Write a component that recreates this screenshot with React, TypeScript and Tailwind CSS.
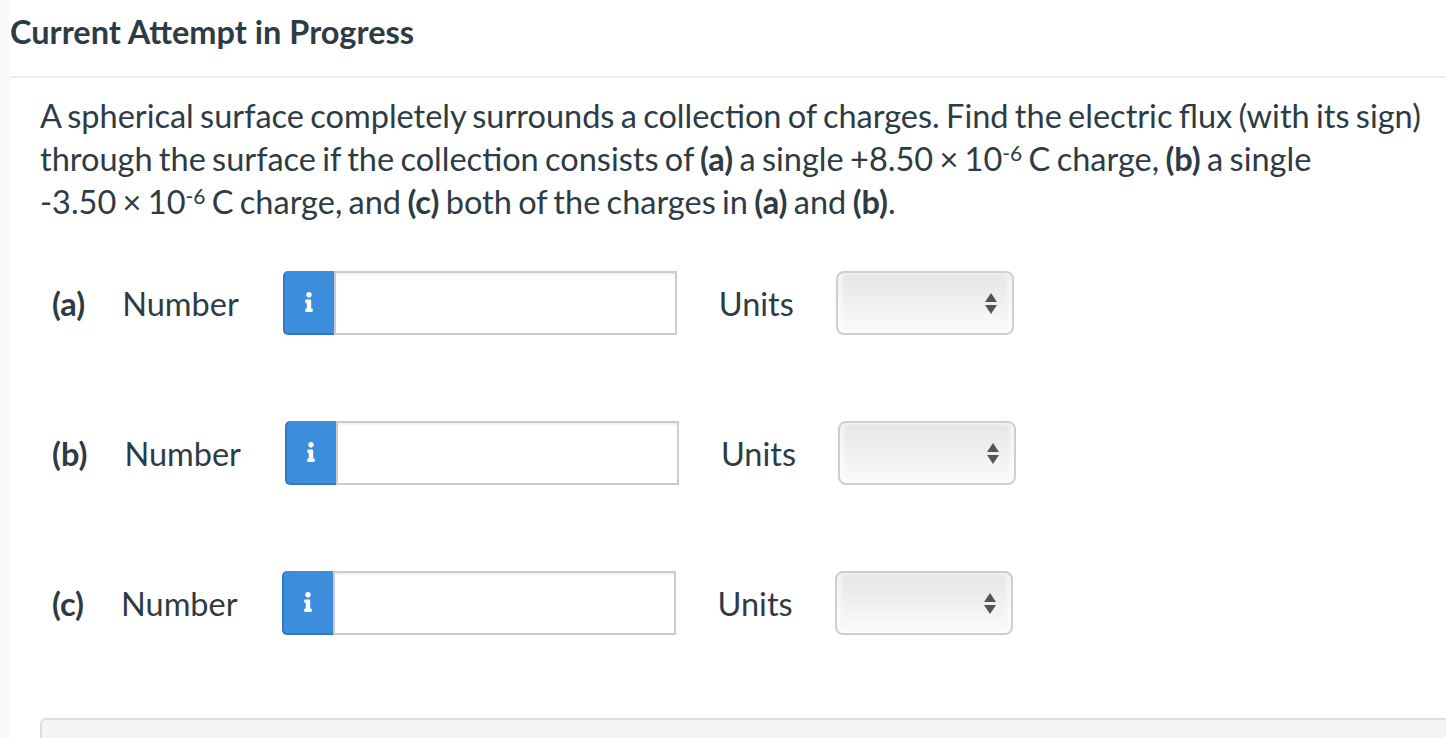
import { FaInfo } from "react-icons/fa";

const rows = [
  { label: "(a)" },
  { label: "(b)" },
  { label: "(c)" },
];

function AnswerRow({ label }: { label: string }) {
  return (
    <div className="flex items-center h-[64px]">
      <span className="font-bold ml-[12px] mr-[37px]">{label}</span>
      <span className="mr-[44px]">Number</span>
      <button className="w-[51px] h-[64px] bg-[#3d8ddd] border-b-2 border-l-2 border-[#2f78c4] rounded-l-[5px] flex items-center justify-center text-white">
        <FaInfo className="w-[12px] h-[20px]" />
      </button>
      <input
        type="text"
        className="w-[343px] h-[64px] border-2 border-[#cccccc] bg-white shadow-[inset_0_2px_2px_rgba(0,0,0,0.06)] outline-none"
      />
      <span className="ml-[42px]">Units</span>
      <div className="ml-[42px] w-[178px] h-[64px] rounded-[8px] border-2 border-[#cfcfcf] bg-gradient-to-b from-[#e5e5e5] to-[#fbfbfb] shadow-[inset_4px_0_4px_rgba(255,255,255,0.6),inset_-4px_0_4px_rgba(255,255,255,0.6)] flex items-center justify-end pr-[15px]">
        <div className="flex flex-col items-center gap-[3px]">
          <div className="w-0 h-0 border-l-[6px] border-r-[6px] border-b-[9px] border-l-transparent border-r-transparent border-b-[#555]" />
          <div className="w-0 h-0 border-l-[6px] border-r-[6px] border-t-[9px] border-l-transparent border-r-transparent border-t-[#555]" />
        </div>
      </div>
    </div>
  );
}

export default function App() {
  return (
    <div
      className="flex h-[738px] overflow-hidden bg-white text-[#2d3b45] text-[32.5px] leading-[43px]"
      style={{ fontFamily: "Lato, 'Noto Sans', sans-serif" }}
    >
      <div className="w-[10px] shrink-0 bg-[#fafafa]" />
      <div className="flex-1 flex flex-col min-w-0">
        <div className="h-[78px] shrink-0 border-b-2 border-[#eeeeee] pt-[10px]">
          <h2 className="font-bold text-[32.5px] leading-[43px]">
            Current Attempt in Progress
          </h2>
        </div>
        <div className="pl-[30px] pt-[16px]">
          <p className="pr-[20px] [word-spacing:-2px]">
            A spherical surface completely surrounds a collection of charges.
            Find the electric flux (with its sign) through the surface if the
            collection consists of <b>(a)</b> a single{" "}
            <span className="whitespace-nowrap">
              +8.50 × 10<sup className="text-[21px] leading-none">-6</sup>
            </span>{" "}
            C charge, <b>(b)</b> a single{" "}
            <span className="whitespace-nowrap">
              -3.50 × 10<sup className="text-[21px] leading-none">-6</sup>
            </span>{" "}
            C charge, and <b>(c)</b> both of the charges in <b>(a)</b> and{" "}
            <b>(b)</b>.
          </p>
          <div className="mt-[48px] flex flex-col gap-[86px]">
            {rows.map((r) => (
              <AnswerRow key={r.label} label={r.label} />
            ))}
          </div>
          <div className="mt-[83px] h-[60px] bg-[#f4f4f4] border-t-2 border-l-2 border-[#dddddd] rounded-tl-[6px]" />
        </div>
      </div>
    </div>
  );
}
